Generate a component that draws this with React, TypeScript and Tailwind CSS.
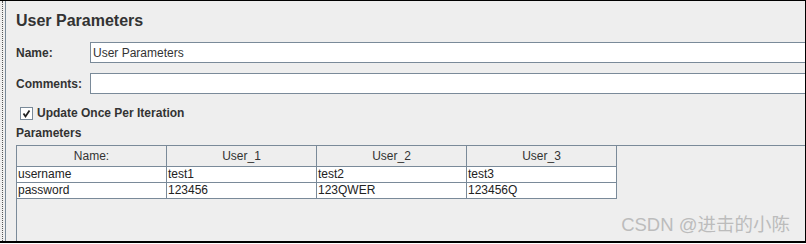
import React from "react";

const rows = [
  ["username", "test1", "test2", "test3"],
  ["password", "123456", "123QWER", "123456Q"],
];

const headers = ["Name:", "User_1", "User_2", "User_3"];

function CheckBox() {
  return (
    <span className="flex h-[13px] w-[13px] items-center justify-center border border-[#7a8a99] bg-white">
      <svg width="11" height="11" viewBox="0 0 11 11">
        <path d="M2.5 5.5 L4.5 8.5 L8.5 2.5" fill="none" stroke="#222" strokeWidth="1.8" />
      </svg>
    </span>
  );
}

function FieldRow({ label, value, className }: { label: string; value: string; className?: string }) {
  return (
    <div className={`flex items-center ${className ?? ""}`}>
      <span className="w-[74px] shrink-0 text-[12px] font-bold leading-[14px] text-[#333]">{label}</span>
      <div className="flex h-[21px] flex-1 items-center border-y border-l border-[#7a8a99] bg-white pl-[2px] text-[12px] text-[#333]">
        {value}
      </div>
    </div>
  );
}

export default function App() {
  return (
    <div className="relative h-[244px] w-[806px] bg-white font-['Liberation_Sans',Arial,sans-serif]">
      <div className="flex h-[243px] border-t border-r border-b-2 border-black bg-[#eeeeee]">
        {/* gutter of the tree splitter */}
        <div className="flex w-[6px] shrink-0">
          <div className="ml-[2px] w-px border-l border-dotted border-[#555]" />
          <div className="ml-[2px] w-px bg-[#7a8a99]" />
        </div>

        <div className="flex min-w-0 flex-1 flex-col overflow-hidden pl-[10px] pt-[11px]">
          <h1 className="text-[16px] font-bold leading-[18px] text-[#333]">User Parameters</h1>

          <FieldRow className="mt-[12px]" label="Name:" value="User Parameters" />
          <FieldRow className="mt-[10px]" label="Comments:" value="" />

          <label className="mt-[11px] flex h-[16px] items-center gap-[4px] pl-[4px]">
            <CheckBox />
            <span className="text-[12px] font-bold text-[#333]">Update Once Per Iteration</span>
          </label>

          <div className="mt-[5px] text-[12px] font-bold leading-[14px] text-[#333]">Parameters</div>

          <div className="mt-[5px] flex-1 border-t border-l border-[#7a8a99]">
            <div className="grid w-[600px] grid-cols-[150px_150px_150px_150px]">
              {headers.map((h) => (
                <div
                  key={h}
                  className="flex h-[21px] items-center justify-center border-r border-b border-[#7a8a99] bg-[#eeeeee] text-[12px] text-[#333]"
                >
                  {h}
                </div>
              ))}
              {rows.map((row) =>
                row.map((cell, i) => (
                  <div
                    key={row[0] + i}
                    className="h-[16px] border-r border-b border-[#7a8a99] bg-white pl-[1px] text-[12px] leading-[15px] text-[#222]"
                  >
                    {cell}
                  </div>
                )),
              )}
            </div>
          </div>
        </div>
      </div>

      <span className="absolute right-[16px] bottom-[9px] text-[18.5px] leading-[20px] text-[#bcbcbc] font-['Liberation_Sans','Noto_Sans_CJK_SC',sans-serif]">
        CSDN @进击的小陈
      </span>
    </div>
  );
}
